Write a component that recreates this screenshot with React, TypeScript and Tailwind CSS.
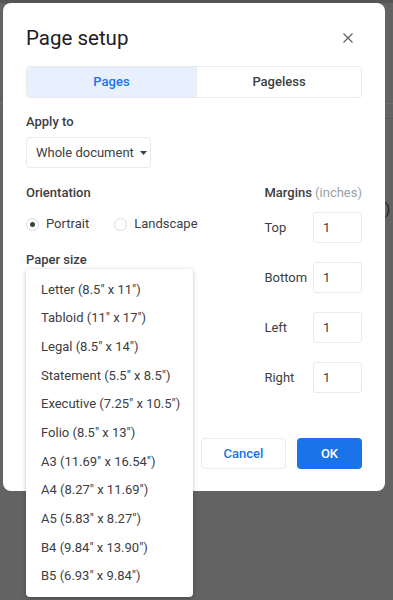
import React from "react";

const items = [
  'Letter (8.5" x 11")',
  'Tabloid (11" x 17")',
  'Legal (8.5" x 14")',
  'Statement (5.5" x 8.5")',
  'Executive (7.25" x 10.5")',
  'Folio (8.5" x 13")',
  'A3 (11.69" x 16.54")',
  'A4 (8.27" x 11.69")',
  'A5 (5.83" x 8.27")',
  'B4 (9.84" x 13.90")',
  'B5 (6.93" x 9.84")',
];

function Radio({ checked, label }: { checked?: boolean; label: string }) {
  return (
    <div className="flex items-center gap-[7px]">
      <span className="w-[13px] h-[13px] rounded-full border border-[#dadce0] flex items-center justify-center">
        {checked && <span className="w-[5px] h-[5px] rounded-full bg-[#3c4043]" />}
      </span>
      <span className="text-[13px] text-[#3c4043]">{label}</span>
    </div>
  );
}

function MarginRow({ label, first }: { label: string; first?: boolean }) {
  return (
    <div className={`flex items-center justify-between h-[31px] ${first ? "mt-[10px]" : "mt-[19px]"}`}>
      <span className="text-[13px] text-[#3c4043] pl-[2px]">{label}</span>
      <div className="w-[49px] h-[31px] border border-[#e8eaed] rounded-[3px] flex items-center pl-[9px] text-[13px] text-[#3c4043]">
        1
      </div>
    </div>
  );
}

export default function App() {
  return (
    <div
      className="w-[393px] h-[600px] bg-[#636363] relative overflow-hidden pt-[3px] pl-[3px]"
      style={{ fontFamily: "Roboto, 'Liberation Sans', sans-serif" }}
    >
      {/* background details */}
      <div className="absolute left-0 right-0 top-[103px] h-[1px] bg-[#6e6e6e]" />
      <div className="absolute left-0 right-0 top-[118px] h-[1px] bg-[#5a5a5a]" />
      <div className="absolute left-0 right-0 top-0 h-[3px] bg-[#555555]" />
      <div className="absolute left-[385px] top-[200px] text-[15px] leading-[18px] text-[#222]">)</div>

      <div className="relative w-[382px] h-[488px] bg-white rounded-[8px] px-[23px] pt-[21px]">
        {/* header */}
        <div className="flex items-center justify-between h-[28px]">
          <span className="text-[20.5px] text-[#202124]">Page setup</span>
          <svg width="12" height="12" viewBox="0 0 12 12" className="mr-[8px]">
            <path d="M1.5 1.5 L10.5 10.5 M10.5 1.5 L1.5 10.5" stroke="#5f6368" strokeWidth="1.3" />
          </svg>
        </div>

        {/* tabs */}
        <div className="mt-[14px] flex h-[32px] border border-[#e8eaed] rounded-[4px] overflow-hidden">
          <div className="w-[169px] bg-[#e8f0fe] flex items-center justify-center text-[13px] font-medium text-[#1a73e8]">
            Pages
          </div>
          <div className="flex-1 border-l border-[#e8eaed] flex items-center justify-center text-[13px] font-medium text-[#3c4043]">
            Pageless
          </div>
        </div>

        {/* apply to */}
        <div className="mt-[15px] h-[18px] leading-[18px] text-[13px] font-medium text-[#3c4043]">Apply to</div>
        <div className="mt-[6px] w-[125px] h-[31px] border border-[#e8eaed] rounded-[4px] flex items-center pl-[9px] text-[13px] text-[#3c4043] whitespace-nowrap">
          <span>Whole document</span>
          <svg width="7" height="4" viewBox="0 0 7 4" className="ml-[6px]">
            <path d="M0 0 L7 0 L3.5 4 Z" fill="#3c4043" />
          </svg>
        </div>

        <div className="flex mt-[16px]">
          {/* left column */}
          <div className="w-[237px] relative">
            <div className="h-[18px] leading-[18px] text-[13px] font-medium text-[#3c4043]">Orientation</div>
            <div className="mt-[12px] h-[20px] flex items-center gap-[25px]">
              <Radio checked label="Portrait" />
              <Radio label="Landscape" />
            </div>
            <div className="mt-[17px] h-[18px] leading-[18px] text-[13px] font-medium text-[#3c4043]">Paper size</div>

            {/* open menu */}
            <div className="absolute left-0 top-[85px] w-[167px] bg-white rounded-[4px] shadow-[0_1px_4px_rgba(0,0,0,0.25)] py-[6px] z-10">
              {items.map((it) => (
                <div key={it} className="h-[28.7px] flex items-center pl-[15px] text-[13px] text-[#3c4043] whitespace-nowrap">
                  {it}
                </div>
              ))}
            </div>
          </div>

          {/* right column */}
          <div className="flex-1">
            <div className="h-[18px] leading-[18px] text-[13px] whitespace-nowrap pl-[2px]">
              <span className="font-medium text-[#3c4043]">Margins</span>{" "}
              <span className="text-[#9aa0a6]">(inches)</span>
            </div>
            <MarginRow label="Top" first />
            <MarginRow label="Bottom" />
            <MarginRow label="Left" />
            <MarginRow label="Right" />
          </div>
        </div>

        {/* buttons */}
        <div className="mt-[45px] flex justify-end gap-[11px]">
          <div className="w-[85px] h-[31px] border border-[#e8eaed] rounded-[4px] flex items-center justify-center text-[13px] font-medium text-[#1a73e8]">
            Cancel
          </div>
          <div className="w-[65px] h-[31px] bg-[#1a73e8] rounded-[4px] flex items-center justify-center text-[13px] font-medium text-white">
            OK
          </div>
        </div>
      </div>
    </div>
  );
}
